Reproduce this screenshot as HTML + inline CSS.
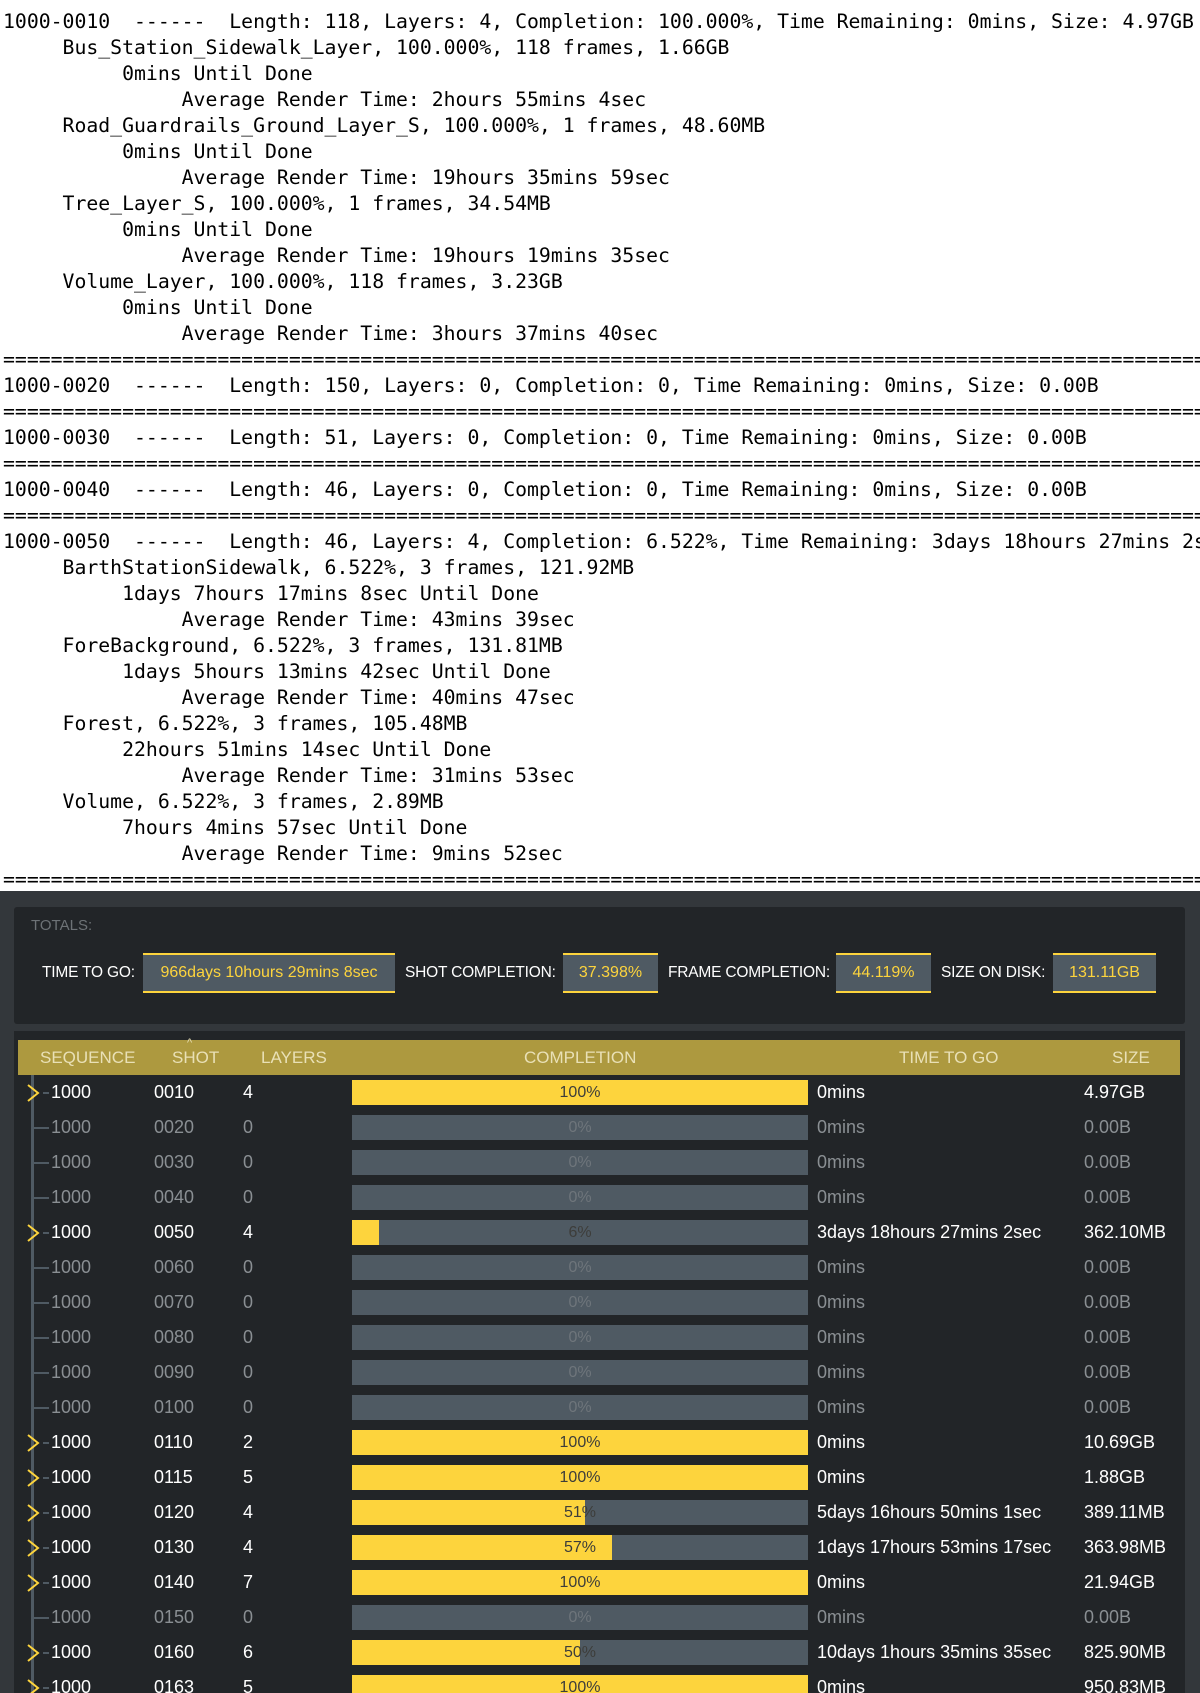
<!DOCTYPE html>
<html><head><meta charset="utf-8"><style>
body{margin:0;width:1200px;height:1693px;overflow:hidden;background:#fff;}
pre{margin:0;padding:9px 0 0 3px;font-family:"DejaVu Sans Mono","Liberation Mono",monospace;font-size:19.8px;line-height:26px;color:#000;white-space:pre;overflow:hidden;width:1197px;height:882px;}
.dark{position:absolute;left:0;top:891px;width:1200px;height:802px;background:#33373b;font-family:"Liberation Sans",sans-serif;overflow:hidden}
.tot{position:absolute;left:14px;top:16px;width:1171px;height:117px;background:#222528;border-radius:3px;}
.tl{position:absolute;left:17px;top:10px;color:#6d7276;font-size:15px;}
.lab{position:absolute;top:57px;color:#fff;font-size:15.5px;line-height:18px;white-space:nowrap;letter-spacing:-.2px}
.box{position:absolute;top:46px;height:36px;background:#4f5a63;border-top:2px solid #fdd43d;border-bottom:2px solid #fdd43d;color:#fdd43d;font-size:16px;line-height:36px;text-align:center;white-space:nowrap}
.tab{position:absolute;left:14px;top:140px;width:1171px;height:700px;background:#222528;}
.hd{position:absolute;left:4px;top:9px;width:1162px;height:35px;background:#ad993f;color:#e9e0b6;font-size:17px;line-height:35px}
.hd span{position:absolute}
.row{position:absolute;left:0;width:1171px;height:35px;font-size:18px;color:#fff;line-height:35px}
.row.in{color:#8a8f93}
.row span{position:absolute}
.bar{position:absolute;left:338px;top:5px;width:456px;height:25px;background:#4f5a63;}
.bar i{position:absolute;left:0;top:0;height:25px;background:#fdd43d}
.bar b{position:absolute;left:0;width:456px;top:0;line-height:25px;text-align:center;font-weight:normal;font-size:16px;color:#3d3d3a}
.row.in .bar b{color:#6e757b}
.vl{position:absolute;left:17px;top:44px;width:3px;height:660px;background:#4f5a63}
.tk{position:absolute;left:19px;top:17px;width:16px;height:2px;background:#4f5a63}
.ch{position:absolute;left:12px;top:8px}
</style></head><body>
<pre>1000-0010  ------  Length: 118, Layers: 4, Completion: 100.000%, Time Remaining: 0mins, Size: 4.97GB
     Bus_Station_Sidewalk_Layer, 100.000%, 118 frames, 1.66GB
          0mins Until Done
               Average Render Time: 2hours 55mins 4sec
     Road_Guardrails_Ground_Layer_S, 100.000%, 1 frames, 48.60MB
          0mins Until Done
               Average Render Time: 19hours 35mins 59sec
     Tree_Layer_S, 100.000%, 1 frames, 34.54MB
          0mins Until Done
               Average Render Time: 19hours 19mins 35sec
     Volume_Layer, 100.000%, 118 frames, 3.23GB
          0mins Until Done
               Average Render Time: 3hours 37mins 40sec
========================================================================================================================
1000-0020  ------  Length: 150, Layers: 0, Completion: 0, Time Remaining: 0mins, Size: 0.00B
========================================================================================================================
1000-0030  ------  Length: 51, Layers: 0, Completion: 0, Time Remaining: 0mins, Size: 0.00B
========================================================================================================================
1000-0040  ------  Length: 46, Layers: 0, Completion: 0, Time Remaining: 0mins, Size: 0.00B
========================================================================================================================
1000-0050  ------  Length: 46, Layers: 4, Completion: 6.522%, Time Remaining: 3days 18hours 27mins 2sec, Size: 362.10MB
     BarthStationSidewalk, 6.522%, 3 frames, 121.92MB
          1days 7hours 17mins 8sec Until Done
               Average Render Time: 43mins 39sec
     ForeBackground, 6.522%, 3 frames, 131.81MB
          1days 5hours 13mins 42sec Until Done
               Average Render Time: 40mins 47sec
     Forest, 6.522%, 3 frames, 105.48MB
          22hours 51mins 14sec Until Done
               Average Render Time: 31mins 53sec
     Volume, 6.522%, 3 frames, 2.89MB
          7hours 4mins 57sec Until Done
               Average Render Time: 9mins 52sec
========================================================================================================================</pre>
<div class="dark">
<div class="tot">
<div class="tl">TOTALS:</div>
<div class="lab" style="left:28px">TIME TO GO:</div>
<div class="box" style="left:129px;width:252px">966days 10hours 29mins 8sec</div>
<div class="lab" style="left:391px">SHOT COMPLETION:</div>
<div class="box" style="left:549px;width:95px">37.398%</div>
<div class="lab" style="left:654px">FRAME COMPLETION:</div>
<div class="box" style="left:822px;width:95px">44.119%</div>
<div class="lab" style="left:927px">SIZE ON DISK:</div>
<div class="box" style="left:1039px;width:103px">131.11GB</div>
</div>
<div class="tab">
<div class="hd"><span style="left:22px">SEQUENCE</span><span style="left:154px">SHOT</span><span style="left:243px">LAYERS</span><span style="left:506px">COMPLETION</span><span style="left:881px">TIME TO GO</span><span style="left:1094px">SIZE</span><span style="left:169px;top:-14px;font-size:11px;color:#e9e0b6">^</span></div>
<div class="vl"></div>
<div id="rows"></div>
</div>
</div>
<script>
var d=[["0010",4,100,"0mins","4.97GB"],["0020",0,0],["0030",0,0],["0040",0,0],["0050",4,6,"3days 18hours 27mins 2sec","362.10MB"],["0060",0,0],["0070",0,0],["0080",0,0],["0090",0,0],["0100",0,0],["0110",2,100,"0mins","10.69GB"],["0115",5,100,"0mins","1.88GB"],["0120",4,51,"5days 16hours 50mins 1sec","389.11MB"],["0130",4,57,"1days 17hours 53mins 17sec","363.98MB"],["0140",7,100,"0mins","21.94GB"],["0150",0,0],["0160",6,50,"10days 1hours 35mins 35sec","825.90MB"],["0163",5,100,"0mins","950.83MB"]];
var h="";
d.forEach(function(r,i){var a=r[1]>0;
h+='<div class="row'+(a?'':' in')+'" style="top:'+(44+i*35)+'px">'+(a?'<svg class="ch" width="14" height="20"><polyline points="2,2 12,10 2,18" fill="none" stroke="#fdd43d" stroke-width="2"/></svg><div class="tk" style="left:29px;width:6px"></div>':'<div class="tk"></div>')+
'<span style="left:37px">1000</span><span style="left:140px">'+r[0]+'</span><span style="left:229px">'+r[1]+'</span>'+
'<div class="bar"><i style="width:'+(r[2]*4.56)+'px"></i><b>'+r[2]+'%</b></div>'+
'<span style="left:803px">'+(r[3]||"0mins")+'</span><span style="left:1070px">'+(r[4]||"0.00B")+'</span></div>';});
document.getElementById("rows").innerHTML=h;
</script>
</body></html>
